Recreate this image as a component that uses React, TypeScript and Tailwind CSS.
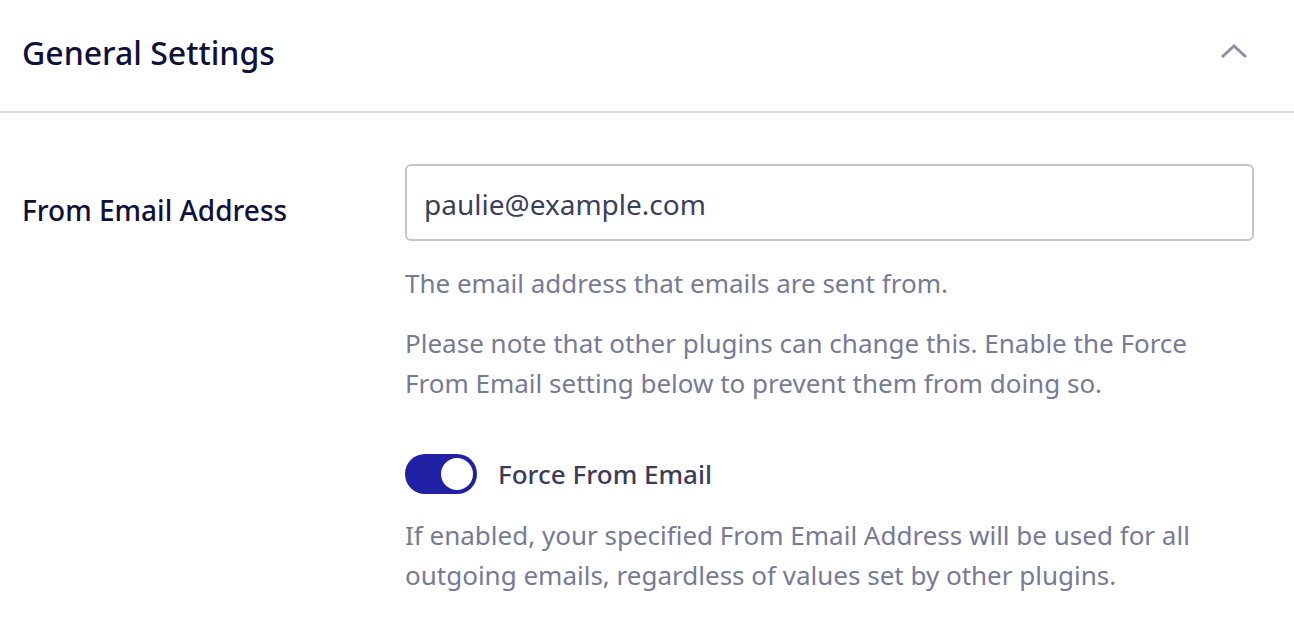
import React from "react";

export default function App() {
  return (
    <div className="w-[1294px] h-[644px] bg-white overflow-hidden" style={{ fontFamily: '"Noto Sans", "Open Sans", sans-serif' }}>
      <div className="h-[113px] flex items-center justify-between pl-[22px] pr-[46px] border-b-2 border-[#dcdce3]">
        <h2 className="text-[32px] font-medium text-[#10113a] leading-none -mt-[6px]">General Settings</h2>
        <svg width="28" height="16" viewBox="0 0 28 16" className="-mt-[10px]">
          <path d="M2 14 L14 3 L26 14" fill="none" stroke="#8c8fa6" strokeWidth="3" />
        </svg>
      </div>
      <div className="flex pl-[22px] pt-[51px]">
        <div className="w-[383px] pt-[28px]">
          <label className="text-[28px] font-medium text-[#10113a] leading-[36px]">From Email Address</label>
        </div>
        <div className="w-[849px]">
          <div className="h-[77px] border-2 border-[#c3c3c9] rounded-[6px] flex items-center px-[17px] pt-[3px]">
            <span className="text-[28px] text-[#3a3f5c] leading-none">paulie@example.com</span>
          </div>
          <p className="mt-[22px] text-[26px] leading-[40px] text-[#777a96]">The email address that emails are sent from.</p>
          <p className="mt-[20px] text-[26px] leading-[40px] text-[#777a96]">Please note that other plugins can change this. Enable the Force From Email setting below to prevent them from doing so.</p>
          <div className="mt-[51px] flex items-center gap-[21px]">
            <div className="w-[72px] h-[40px] rounded-full bg-[#2121a6] flex items-center justify-end pr-[4px]">
              <div className="w-[32px] h-[32px] rounded-full bg-white" />
            </div>
            <span className="text-[26px] font-medium text-[#3a3c5a] leading-none">Force From Email</span>
          </div>
          <p className="mt-[21px] text-[26px] leading-[40px] text-[#777a96]">If enabled, your specified From Email Address will be used for all outgoing emails, regardless of values set by other plugins.</p>
        </div>
      </div>
    </div>
  );
}
